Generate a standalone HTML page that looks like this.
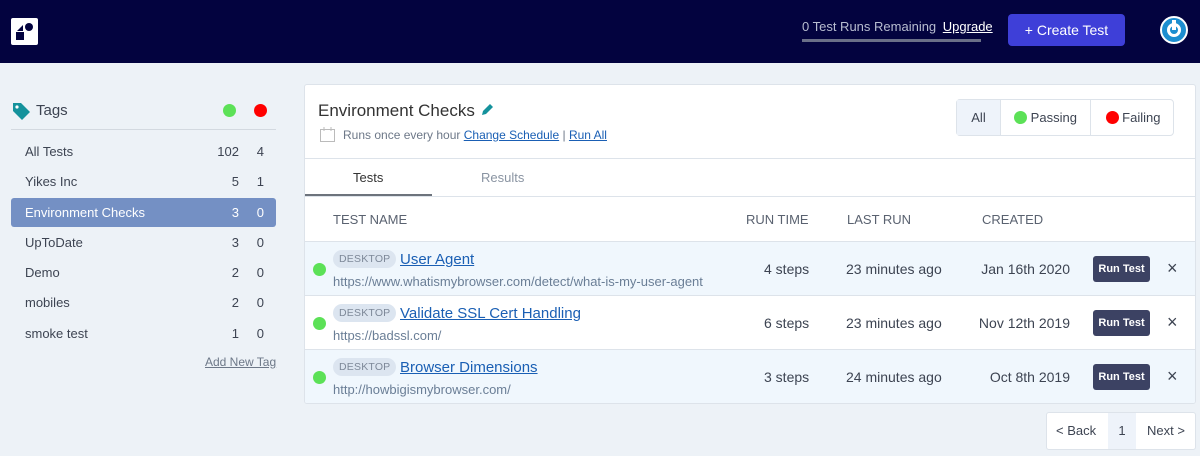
<!DOCTYPE html>
<html><head><meta charset="utf-8"><style>
*{box-sizing:border-box;margin:0;padding:0}
body{width:1200px;height:456px;overflow:hidden;background:#edf2f7;font-family:"Liberation Sans",sans-serif;color:#3d4452;position:relative}
.hdr{position:absolute;left:0;top:0;width:1200px;height:63px;background:#03033f}
.abs{position:absolute}
a{color:#1a5fb4;text-decoration:underline}
.side div.r{position:absolute;left:11px;width:265px;height:29px;font-size:13px;line-height:29px}
.r span{position:absolute}
.r .n{left:14px}.r .a{right:37px;text-align:right}.r .b{right:12px}
.card{position:absolute;left:304px;top:84px;width:892px;height:320px;background:#fff;border:1px solid #dde3ea;border-radius:3px;overflow:hidden}
.row{position:absolute;left:0;width:892px;height:54px;border-top:1px solid #dde3ea;font-size:14px}
.row span{position:absolute}
.dot{width:13px;height:13px;border-radius:50%;background:#5ce157;display:inline-block}
.tag{left:28px;top:8px;background:#dce5f0;color:#7d8898;font-size:10.5px;border-radius:10px;padding:3px 6px;letter-spacing:.2px}
.btn{background:#3c4263;color:#fff;font-size:11px;font-weight:bold;border-radius:3px;width:57px;height:26px;line-height:26px;text-align:center}
</style></head><body>
<div class="hdr">
 <div class="abs" style="left:11px;top:18px;width:27px;height:27px;background:#fff;border-radius:2px">
  <div class="abs" style="left:5px;top:14px;width:8px;height:8px;background:#03033f"></div>
  <div class="abs" style="left:14px;top:5px;width:8px;height:8px;border-radius:50%;background:#03033f"></div>
  <div class="abs" style="left:6px;top:7px;width:0;height:0;border-left:6px solid transparent;border-bottom:6px solid #03033f"></div>
 </div>
 <div class="abs" style="left:802px;top:19px;font-size:13px;color:#b8bdd0">0 Test Runs Remaining <span style="color:#fff;text-decoration:underline;margin-left:3px">Upgrade</span></div>
 <div class="abs" style="left:802px;top:39px;width:179px;height:3px;background:#6a6f88"></div>
 <div class="abs" style="left:1008px;top:14px;width:117px;height:32px;background:#3e3fd8;border-radius:4px;color:#fff;font-size:14px;line-height:32px;text-align:center">+ Create Test</div>
 <div class="abs" style="left:1160px;top:16px;width:28px;height:28px;border-radius:50%;background:#1c8ed0;border:2px solid #fff"><div class="abs" style="left:5px;top:5px;width:14px;height:14px;border-radius:50%;border:3px solid #fff"></div><div class="abs" style="left:10px;top:2px;width:4px;height:10px;background:#fff"></div></div>
</div>
<div class="side">
 <svg class="abs" style="left:12px;top:102px" width="19" height="19" viewBox="0 0 19 19"><path d="M1 1h8l9 9-8 8-9-9z" fill="#14929c"/><circle cx="5" cy="5" r="1.6" fill="#fff"/></svg>
 <div class="abs" style="left:36px;top:102px;font-size:15px">Tags</div>
 <div class="abs dot" style="left:223px;top:104px"></div>
 <div class="abs dot" style="left:254px;top:104px;background:#f00"></div>
 <div class="abs" style="left:11px;top:129px;width:265px;height:1px;background:#d3d9e0"></div>
 <div class="r" style="top:137px"><span class="n">All Tests</span><span class="a">102</span><span class="b">4</span></div>
 <div class="r" style="top:167px"><span class="n">Yikes Inc</span><span class="a">5</span><span class="b">1</span></div>
 <div class="r" style="top:198px;background:#7490c4;color:#fff;border-radius:3px"><span class="n">Environment Checks</span><span class="a">3</span><span class="b">0</span></div>
 <div class="r" style="top:228px"><span class="n">UpToDate</span><span class="a">3</span><span class="b">0</span></div>
 <div class="r" style="top:258px"><span class="n">Demo</span><span class="a">2</span><span class="b">0</span></div>
 <div class="r" style="top:288px"><span class="n">mobiles</span><span class="a">2</span><span class="b">0</span></div>
 <div class="r" style="top:319px"><span class="n">smoke test</span><span class="a">1</span><span class="b">0</span></div>
 <div class="abs" style="left:205px;top:355px;font-size:12px;color:#6d7888;text-decoration:underline">Add New Tag</div>
</div>
<div class="card">
 <div class="abs" style="left:13px;top:16px;font-size:17px;color:#333">Environment Checks</div>
 <svg class="abs" style="left:175px;top:18px" width="14" height="14" viewBox="0 0 14 14"><path d="M2 12l1-4 7-7 3 3-7 7z" fill="#14929c"/></svg>
 <svg class="abs" style="left:15px;top:42px" width="15" height="15"><rect x="0.5" y="2.5" width="14" height="12" fill="none" stroke="#bbb"/><line x1="4" y1="0" x2="4" y2="4" stroke="#bbb"/><line x1="11" y1="0" x2="11" y2="4" stroke="#bbb"/></svg>
 <div class="abs" style="left:38px;top:43px;font-size:12px;color:#6d7888">Runs once every hour <a>Change Schedule</a> | <a>Run All</a></div>
 <div class="abs" style="left:651px;top:14px;width:218px;height:37px;border:1px solid #dde3ea;border-radius:4px;font-size:13px;line-height:35px">
  <div class="abs" style="left:0;top:0;width:44px;height:35px;background:#eef3fa;text-align:center;border-right:1px solid #dde3ea">All</div>
  <div class="abs" style="left:44px;top:0;width:90px;height:35px;text-align:center;border-right:1px solid #dde3ea"><span class="dot" style="vertical-align:-2px"></span> Passing</div>
  <div class="abs" style="left:134px;top:0;width:84px;height:35px;text-align:center"><span class="dot" style="background:#f00;vertical-align:-2px"></span> Failing</div>
 </div>
 <div class="abs" style="left:0;top:73px;width:892px;height:1px;background:#dde3ea"></div>
 <div class="abs" style="left:48px;top:85px;font-size:13px;color:#333">Tests</div>
 <div class="abs" style="left:176px;top:85px;font-size:13px;color:#8a94a2">Results</div>
 <div class="abs" style="left:0;top:109px;width:127px;height:3px;background:#6d737c"></div>
 <div class="abs" style="left:0;top:111px;width:892px;height:1px;background:#dde3ea"></div>
 <div class="abs" style="top:127px;left:28px;font-size:13px;color:#5a6270;width:850px">
  <span class="abs" style="left:0">TEST NAME</span><span class="abs" style="left:413px">RUN TIME</span><span class="abs" style="left:514px">LAST RUN</span><span class="abs" style="left:649px">CREATED</span></div>
 <div class="row" style="top:156px;background:#f0f7fd">
  <span class="dot" style="left:8px;top:21px"></span><span class="tag">DESKTOP</span>
  <span style="left:95px;top:9px;font-size:15px"><a>User Agent</a></span>
  <span style="left:28px;top:32px;font-size:13px;color:#6a7e96">https://www.whatismybrowser.com/detect/what-is-my-user-agent</span>
  <span style="left:459px;top:19px">4 steps</span><span style="left:541px;top:19px">23 minutes ago</span><span style="right:127px;top:19px">Jan 16th 2020</span>
  <span class="btn" style="left:788px;top:14px">Run Test</span><span style="left:862px;top:16px;font-size:18px">×</span></div>
 <div class="row" style="top:210px">
  <span class="dot" style="left:8px;top:21px"></span><span class="tag">DESKTOP</span>
  <span style="left:95px;top:9px;font-size:15px"><a>Validate SSL Cert Handling</a></span>
  <span style="left:28px;top:32px;font-size:13px;color:#6a7e96">https://badssl.com/</span>
  <span style="left:459px;top:19px">6 steps</span><span style="left:541px;top:19px">23 minutes ago</span><span style="right:127px;top:19px">Nov 12th 2019</span>
  <span class="btn" style="left:788px;top:14px">Run Test</span><span style="left:862px;top:16px;font-size:18px">×</span></div>
 <div class="row" style="top:264px;background:#f0f7fd">
  <span class="dot" style="left:8px;top:21px"></span><span class="tag">DESKTOP</span>
  <span style="left:95px;top:9px;font-size:15px"><a>Browser Dimensions</a></span>
  <span style="left:28px;top:32px;font-size:13px;color:#6a7e96">http://howbigismybrowser.com/</span>
  <span style="left:459px;top:19px">3 steps</span><span style="left:541px;top:19px">24 minutes ago</span><span style="right:127px;top:19px">Oct 8th 2019</span>
  <span class="btn" style="left:788px;top:14px">Run Test</span><span style="left:862px;top:16px;font-size:18px">×</span></div>
</div>
<div class="abs" style="left:1046px;top:412px;width:150px;height:38px;background:#fff;border:1px solid #dde3ea;border-radius:3px;font-size:13px;line-height:36px">
 <span class="abs" style="left:9px">&lt; Back</span>
 <div class="abs" style="left:61px;top:0;width:28px;height:36px;background:#eef3fa;text-align:center">1</div>
 <span class="abs" style="left:100px">Next &gt;</span>
</div>
</body></html>
